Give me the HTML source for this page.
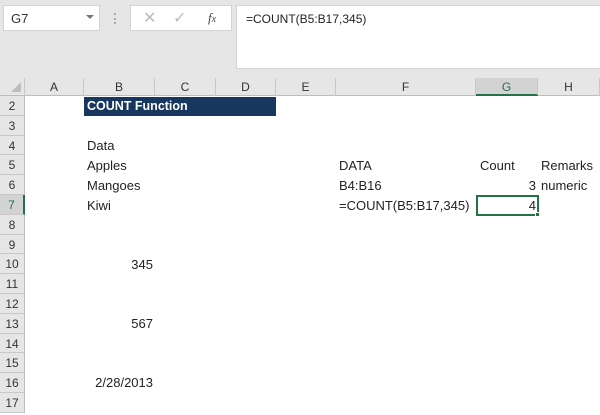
<!DOCTYPE html>
<html><head><style>
*{margin:0;padding:0;box-sizing:border-box}
body{width:600px;height:415px;overflow:hidden;background:#fff;font-family:"Liberation Sans",Arial,sans-serif;position:relative;color:#222}
.a{position:absolute}
.top{left:0;top:0;width:600px;height:78px;background:#e6e6e6}
.box{background:#fff;border:1px solid #d4d4d4}
.hdr{top:78px;height:18px;background:#e6e6e6;border-right:1px solid #c8c8c8;border-bottom:1px solid #bdbdbd;font-size:12px;color:#333;text-align:center;line-height:18px}
.rh{left:0;width:25px;height:19.8px;background:#e6e6e6;border-bottom:1px solid #c8c8c8;border-right:1px solid #bdbdbd;font-size:12px;color:#333;text-align:center;line-height:20px}
.t{font-size:13px;line-height:20px;height:20px;white-space:nowrap}
</style></head><body>
<div class="a top"></div>
<div class="a box" style="left:3px;top:5px;width:97px;height:26px"></div>
<div class="a" style="left:11px;top:11px;font-size:13px;color:#333">G7</div>
<div class="a" style="left:86px;top:15px;width:0;height:0;border-left:4px solid transparent;border-right:4px solid transparent;border-top:4px solid #777"></div>
<div class="a" style="left:114px;top:13px;width:2px;height:11px;border-left:2px dotted #aaa"></div>
<div class="a box" style="left:130px;top:5px;width:102px;height:26px"></div>
<div class="a" style="left:143px;top:8px;font-size:16px;color:#bbb">✕</div>
<div class="a" style="left:173px;top:8px;font-size:16px;color:#bbb">✓</div>
<div class="a" style="left:208px;top:10px;font-size:13px;font-style:italic;font-family:'Liberation Serif',serif;color:#444">f<span style="font-size:10px">x</span></div>
<div class="a box" style="left:236px;top:5px;width:370px;height:64px"></div>
<div class="a" style="left:246px;top:12px;font-size:12px;color:#222">=COUNT(B5:B17,345)</div>

<div class="a hdr" style="left:0;width:25px"><div style="position:absolute;right:3px;bottom:3px;width:0;height:0;border-left:10px solid transparent;border-bottom:10px solid #bdbdbd"></div></div>
<div class="a hdr" style="left:25px;width:59px">A</div>
<div class="a hdr" style="left:84px;width:71px">B</div>
<div class="a hdr" style="left:155px;width:61px">C</div>
<div class="a hdr" style="left:216px;width:60px">D</div>
<div class="a hdr" style="left:276px;width:60px">E</div>
<div class="a hdr" style="left:336px;width:140px">F</div>
<div class="a hdr" style="left:476px;width:62px;background:#d3d3d3;border-bottom:2px solid #217346;color:#217346">G</div>
<div class="a hdr" style="left:538px;width:62px">H</div>

<div class="a rh" style="top:96px">2</div>
<div class="a rh" style="top:115.8px">3</div>
<div class="a rh" style="top:135.6px">4</div>
<div class="a rh" style="top:155.4px">5</div>
<div class="a rh" style="top:175.2px">6</div>
<div class="a rh" style="top:195px;background:#d3d3d3;border-right:2px solid #217346;color:#217346">7</div>
<div class="a rh" style="top:214.8px">8</div>
<div class="a rh" style="top:234.6px">9</div>
<div class="a rh" style="top:254.4px">10</div>
<div class="a rh" style="top:274.2px">11</div>
<div class="a rh" style="top:294px">12</div>
<div class="a rh" style="top:313.8px">13</div>
<div class="a rh" style="top:333.6px">14</div>
<div class="a rh" style="top:353.4px">15</div>
<div class="a rh" style="top:373.2px">16</div>
<div class="a rh" style="top:393px">17</div>

<div class="a" style="left:84px;top:97px;width:192px;height:19px;background:#17375e"></div>
<div class="a t" style="left:87px;top:96px;color:#fff;font-weight:bold;font-size:12.5px">COUNT Function</div>
<div class="a t" style="left:87px;top:136px">Data</div>
<div class="a t" style="left:87px;top:156px">Apples</div>
<div class="a t" style="left:87px;top:176px">Mangoes</div>
<div class="a t" style="left:87px;top:196px">Kiwi</div>
<div class="a t" style="left:84px;width:69px;text-align:right;top:255px">345</div>
<div class="a t" style="left:84px;width:69px;text-align:right;top:314px">567</div>
<div class="a t" style="left:84px;width:69px;text-align:right;top:373px">2/28/2013</div>

<div class="a t" style="left:339px;top:156px">DATA</div>
<div class="a t" style="left:339px;top:176px">B4:B16</div>
<div class="a t" style="left:339px;top:196px">=COUNT(B5:B17,345)</div>
<div class="a t" style="left:480px;top:156px">Count</div>
<div class="a t" style="left:476px;width:60px;text-align:right;top:176px">3</div>
<div class="a" style="left:476px;top:195px;width:63px;height:21px;border:2px solid #217346"></div>
<div class="a" style="left:535px;top:212px;width:5px;height:5px;background:#217346;border:1px solid #fff"></div>
<div class="a t" style="left:476px;width:60px;text-align:right;top:196px">4</div>
<div class="a t" style="left:541px;top:156px">Remarks</div>
<div class="a t" style="left:541px;top:176px">numeric</div>
</body></html>
